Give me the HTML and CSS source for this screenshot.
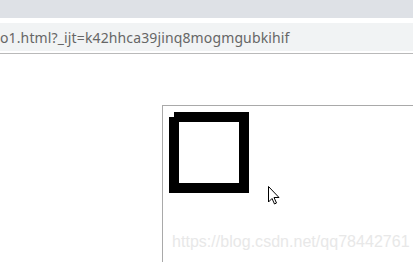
FILE: index.html
```html
<!DOCTYPE html>
<html>
<head>
<meta charset="utf-8">
<link rel="stylesheet" href="styles.css">
</head>
<body>
<div class="tabbar"></div>
<div class="address"><span class="url">o1.html?_ijt=k42hhca39jinq8mogmgubkihif</span></div>
<div class="divider"></div>
<main class="page">
  <div class="canvas">
    <svg class="drawing" width="251" height="160" viewBox="0 0 251 160">
      <path fill="#000" fill-rule="evenodd" d="M11 6 H86 V87 H6 V11 H11 Z M16 16 V77 H76 V16 Z"/>
    </svg>
    <svg class="cursor" width="12" height="19" viewBox="0 0 12 19">
      <path d="M0.5 0.5 V16 L4 12.5 L6.5 18 L8.5 17 L6 11.5 H11 Z" fill="#fff" stroke="#000" stroke-width="1" stroke-linejoin="miter"/>
    </svg>
    <div class="watermark">https://blog.csdn.net/qq78442761</div>
  </div>
</main>
</body>
</html>
```

FILE: styles.css
```css
html, body {
  margin: 0;
  padding: 0;
  background: #fff;
  overflow: hidden;
  width: 413px;
  height: 262px;
}
.tabbar {
  height: 18px;
  background: #dee1e6;
}
.address {
  margin-top: 5px;
  height: 28px;
  background: #f1f3f4;
  display: flex;
  align-items: center;
  overflow: hidden;
}
.url {
  margin-left: 0;
  font-family: "Noto Sans", "Open Sans", sans-serif;
  font-size: 14px;
  letter-spacing: 0.13px;
  color: #666;
  white-space: nowrap;
}
.divider {
  margin-top: 2px;
  height: 1px;
  background: #b9b9b9;
}
.page {
  padding: 51px 0 0 162px;
}
.canvas {
  position: relative;
  height: 160px;
  border-left: 1px solid #a9a9a9;
  border-top: 1px solid #a9a9a9;
}
.drawing {
  display: block;
}
.cursor {
  position: absolute;
  left: 105px;
  top: 80px;
}
.watermark {
  position: absolute;
  left: 9px;
  top: 127px;
  font-family: "Liberation Sans", Arial, sans-serif;
  font-size: 16px;
  letter-spacing: 0.03px;
  color: #e8e8e8;
  white-space: nowrap;
}
```
